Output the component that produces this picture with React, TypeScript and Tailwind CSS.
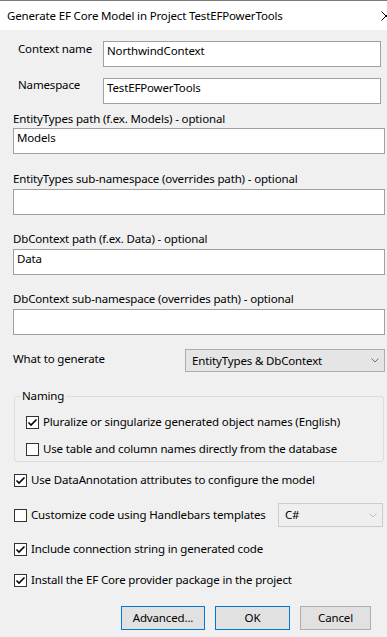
import React from 'react';

function Check({ checked }: { checked?: boolean }) {
  return (
    <span className="w-[13px] h-[13px] shrink-0 border border-[#333333] bg-white flex items-center justify-center">
      {checked && (
        <svg width="11" height="11" viewBox="0 0 11 11">
          <path d="M1.5 5.5 L4 8 L9.5 2.5" fill="none" stroke="#000" strokeWidth="1.6" />
        </svg>
      )}
    </span>
  );
}

function CheckRow({ checked, label, className = '' }: { checked?: boolean; label: string; className?: string }) {
  return (
    <div className={`flex items-center h-4 gap-[4px] ${className}`}>
      <Check checked={checked} />
      <span className="leading-4 whitespace-nowrap">{label}</span>
    </div>
  );
}

function Chevron({ color }: { color: string }) {
  return (
    <svg width="8" height="5" viewBox="0 0 8 5">
      <path d="M0.5 0.5 L4 4 L7.5 0.5" fill="none" stroke={color} strokeWidth="1" />
    </svg>
  );
}

function TextBox({ value, className = '' }: { value?: string; className?: string }) {
  return (
    <div className={`h-[26px] bg-white border border-[#a0a0a0] pl-[3px] pt-[1px] leading-4 ${className}`}>
      {value}
    </div>
  );
}

export default function App() {
  return (
    <div
      className="w-[387px] h-[637px] overflow-hidden bg-[#f0f0f0] border-t border-[#7a7a7a] text-[11.5px] tracking-[-0.15px] text-black"
      style={{ fontFamily: '"Noto Sans", "Open Sans", sans-serif' }}
    >
      {/* Title bar */}
      <div className="h-[29px] bg-white flex items-center justify-between pl-[7px]">
        <span className="leading-4 whitespace-nowrap">Generate EF Core Model in Project TestEFPowerTools</span>
        <svg width="10" height="10" viewBox="0 0 10 10" className="mr-[-4px] shrink-0">
          <path d="M0.5 0.5 L9.5 9.5 M9.5 0.5 L0.5 9.5" stroke="#000" strokeWidth="1" />
        </svg>
      </div>

      <div className="pl-[13px] pr-[2px]">
        <div className="flex items-start mt-[11px]">
          <span className="w-[90px] pl-[5px] leading-4">Context name</span>
          <TextBox value="NorthwindContext" className="w-[278px]" />
        </div>
        <div className="flex items-start mt-[11px]">
          <span className="w-[90px] pl-[5px] leading-4 mt-[-1px]">Namespace</span>
          <TextBox value="TestEFPowerTools" className="w-[278px]" />
        </div>

        <div className="mt-[7px] leading-4">EntityTypes path (f.ex. Models) - optional</div>
        <TextBox value="Models" className="mt-[1px]" />

        <div className="mt-[17px] leading-4">EntityTypes sub-namespace (overrides path) - optional</div>
        <TextBox className="mt-[2px]" />

        <div className="mt-[16px] leading-4">DbContext path (f.ex. Data) - optional</div>
        <TextBox value="Data" className="mt-[2px]" />

        <div className="mt-[16px] leading-4">DbContext sub-namespace (overrides path) - optional</div>
        <TextBox className="mt-[2px]" />

        <div className="flex items-center justify-between mt-[14px]">
          <span className="leading-4 mt-[-3px]">What to generate</span>
          <div className="w-[200px] h-[23px] bg-[#e5e5e5] border border-[#acacac] flex items-center justify-between pl-[6px] pr-[5px]">
            <span className="leading-4">EntityTypes &amp; DbContext</span>
            <Chevron color="#707070" />
          </div>
        </div>

        <fieldset className="mt-[16px] ml-[1px] w-[370px] border border-[#dcdcdc] rounded-[3px] pl-[11px] pb-[4px]">
          <legend className="ml-[-6px] px-[2px] leading-4">Naming</legend>
          <CheckRow checked label="Pluralize or singularize generated object names (English)" className="mt-[10px]" />
          <CheckRow label="Use table and column names directly from the database" className="mt-[11px]" />
        </fieldset>

        <CheckRow checked label="Use DataAnnotation attributes to configure the model" className="mt-[10px] ml-[1px]" />

        <div className="flex items-center justify-between mt-[15px] h-[24px] ml-[1px]">
          <div className="flex items-center gap-[4px]">
            <Check />
            <span className="leading-4 whitespace-nowrap">Customize code using Handlebars templates</span>
          </div>
          <div className="w-[105px] h-[24px] mr-[2px] bg-[#efefef] border border-[#cccccc] flex items-center justify-between pl-[6px] pr-[5px]">
            <span className="leading-4">C#</span>
            <Chevron color="#bfbfbf" />
          </div>
        </div>

        <CheckRow checked label="Include connection string in generated code" className="mt-[14px] ml-[1px]" />
        <CheckRow checked label="Install the EF Core provider package in the project" className="mt-[15px] ml-[1px]" />
      </div>

      <div className="flex justify-end gap-[10px] pr-[16px] mt-[18px]">
        <button className="w-[84px] h-[24px] bg-[#e1e1e1] border border-[#0078d7] leading-4">Advanced...</button>
        <button className="w-[75px] h-[24px] bg-[#e1e1e1] border border-[#0078d7] leading-4">OK</button>
        <button className="w-[71px] h-[24px] bg-[#e1e1e1] border border-[#adadad] leading-4">Cancel</button>
      </div>
    </div>
  );
}
